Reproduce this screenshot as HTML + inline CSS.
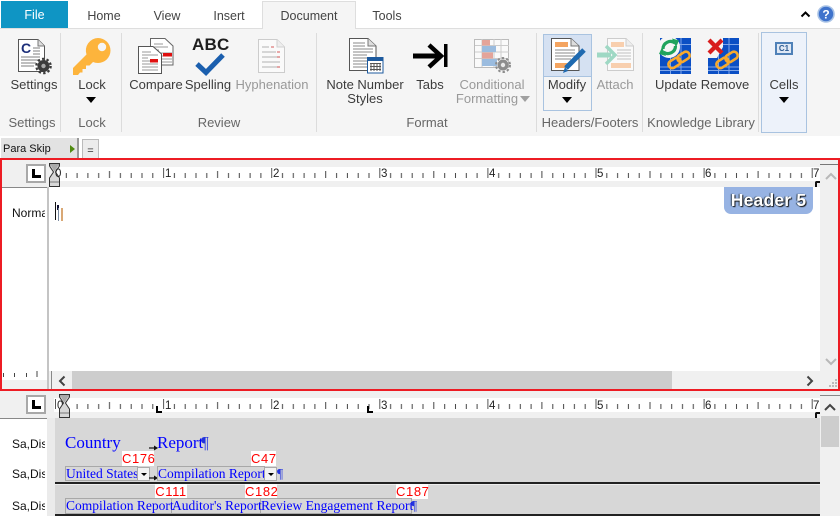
<!DOCTYPE html>
<html>
<head>
<meta charset="utf-8">
<style>
html,body{margin:0;padding:0;background:#fff}
#p{position:relative;width:840px;height:516px;overflow:hidden;background:#fff;font-family:"Liberation Sans",sans-serif;font-size:13px;color:#3c3c3c}
#p div,#p span{position:absolute;white-space:nowrap}
.t{font-size:13px;line-height:16px;text-align:center;transform:translateX(-50%)}
.g{color:#666}
.d{color:#999}
.tab{font-size:12.5px;line-height:16px;top:8px;color:#444;transform:translateX(-50%)}
.sep{width:1px;background:#dcdcdc;top:33px;height:99px}
.tri{width:0;height:0;border-left:5px solid transparent;border-right:5px solid transparent;border-top:6px solid #000}
svg{position:absolute;overflow:visible}
.ser{font-family:"Liberation Serif",serif;color:#0000ff;font-size:13.5px;line-height:16px}
.cn{background:#fff;color:#f00;font-size:13px;line-height:15px;height:15px;text-align:center;letter-spacing:.6px}
.lab{font-size:12px;line-height:14px;color:#111;left:12px;width:33px;overflow:hidden}
.fld{border:1px solid #a8a8a8;box-sizing:border-box}
.dd{background:#f2f2f2;border:1px solid #aaa;box-sizing:border-box;width:13px;height:14px}
.dd i{position:absolute;left:3px;top:5px;width:0;height:0;border-left:3px solid transparent;border-right:3px solid transparent;border-top:3px solid #000}
.rn{font-size:11.5px;line-height:12px;color:#222}
</style>
</head>
<body>
<div id="p">
<!-- Ribbon -->
<div style="left:0;top:28px;width:840px;height:108px;background:#f5f5f5;border-top:1px solid #dedede;box-sizing:border-box"></div>
<div style="left:1px;top:1px;width:67px;height:27px;background:#0f95c4;color:#fff;font-size:12.5px;line-height:29px;text-align:center">File</div>
<div class="tab" style="left:104px">Home</div>
<div class="tab" style="left:167px">View</div>
<div class="tab" style="left:229px">Insert</div>
<div style="left:262px;top:1px;width:94px;height:28px;background:#f5f5f5;border:1px solid #dedede;border-bottom:none;box-sizing:border-box"></div>
<div class="tab" style="left:309px">Document</div>
<div class="tab" style="left:387px">Tools</div>
<svg style="left:800px;top:10px" width="12" height="8"><path d="M1.5 6.5 L5.5 2.5 L9.5 6.5" fill="none" stroke="#000" stroke-width="2"/></svg>
<svg style="left:817px;top:5px" width="18" height="18"><circle cx="9" cy="9" r="8" fill="#3f73cc" stroke="#a9c3e6" stroke-width="1.6"/><text x="9" y="13.5" font-family="Liberation Sans" font-size="12" font-weight="bold" fill="#fff" text-anchor="middle">?</text></svg>

<div class="sep" style="left:60px"></div>
<div class="sep" style="left:121px"></div>
<div class="sep" style="left:316px"></div>
<div class="sep" style="left:536px"></div>
<div class="sep" style="left:642px"></div>
<div class="sep" style="left:758px"></div>

<!-- Settings icon -->
<svg style="left:18px;top:39px" width="36" height="36">
<path d="M0.5 .5H20L26.5 7V32.5H0.5Z" fill="#fff" stroke="#555"/>
<path d="M20 .5V7H26.5" fill="#ddd" stroke="#777"/>
<text x="3" y="14" font-family="Liberation Sans" font-weight="bold" font-size="14" fill="#1d2f7a">C</text>
<path d="M15 9h7M15 12h7M15 15h7M3 18h19M3 21h19M3 24h15M3 27h13" stroke="#999" stroke-width="1.3"/>
<circle cx="25.5" cy="27" r="6" fill="#3c3c3c"/><circle cx="25.5" cy="27" r="7.2" fill="none" stroke="#3c3c3c" stroke-width="2.2" stroke-dasharray="2.4 2.2"/><circle cx="25.5" cy="27" r="2.2" fill="#aaa"/>
</svg>
<div class="t" style="left:34px;top:77px">Settings</div>
<div class="t g" style="left:32px;top:115px">Settings</div>

<!-- Key -->
<svg style="left:73px;top:38px" width="38" height="38"><path d="M25 0a12.500 12.500 0 0 1 0 25c-1.800 0-3.500-.4-5-1l-3.500 3.500h-3.500v3.500h-3.500v3.500H7L5 37H0V30L13.500 16.500A12.500 12.500 0 0 1 25 0Z" fill="#fdb43c"/><circle cx="29" cy="9" r="4.200" fill="#f5f5f5"/></svg>
<div class="t" style="left:92px;top:77px">Lock</div>
<div class="tri" style="left:86px;top:97px"></div>
<div class="t g" style="left:92px;top:115px">Lock</div>

<!-- Compare -->
<svg style="left:138px;top:38px" width="38" height="37">
<path d="M12.500 .5H27L35 8V27H12.500Z" fill="#fff" stroke="#666"/>
<path d="M16 6h9M16 9h14M16 12h5M16 15h18M16 18h18M16 21h18M16 24h18" stroke="#999"/>
<rect x="25" y="15" width="9" height="3.500" fill="#e01010"/>
<path d="M0.500 8.500H15L23.500 16V35.500H.5Z" fill="#fff" stroke="#555"/>
<path d="M4 14h9M4 17h16M4 20h6M4 23h16M4 26h16M4 29h16M4 32h16" stroke="#999"/>
<rect x="12" y="21" width="8" height="3.500" fill="#e01010"/>
</svg>
<div class="t" style="left:156px;top:77px">Compare</div>

<!-- Spelling -->
<div style="left:192px;top:36px;font-size:17px;font-weight:bold;line-height:18px;color:#1e1e1e;letter-spacing:.2px">ABC</div>
<svg style="left:195px;top:52px" width="30" height="24"><path d="M2 12 L11 20.500 L28 3" fill="none" stroke="#1b5fae" stroke-width="5"/></svg>
<div class="t" style="left:208px;top:77px">Spelling</div>

<!-- Hyphenation -->
<svg style="left:258px;top:39px" width="28" height="35" opacity=".9">
<path d="M.5.5H19L26.500 8V33.500H.5Z" fill="#fbfbfb" stroke="#c8c8c8"/>
<path d="M19 .5V8H26.500" fill="#eee" stroke="#ccc"/>
<path d="M4 8h7M4 13h14M4 18h18M4 23h18M4 28h18" stroke="#bbb" stroke-width="1.200"/>
<path d="M13 8h3M19 13h3M19 18h3M19 28h3" stroke="#e08585" stroke-width="1.600"/>
</svg>
<div class="t d" style="left:272px;top:77px">Hyphenation</div>
<div class="t g" style="left:219px;top:115px">Review</div>

<!-- Note Number -->
<svg style="left:349px;top:38px" width="36" height="37">
<path d="M.5.5H19L27 8V32.500H.5Z" fill="#fff" stroke="#555"/>
<path d="M19 .5V8H27" fill="#ddd" stroke="#777"/>
<path d="M4 5h12M4 8h12M4 11h20M4 14h20M4 17h14M4 20h14M4 23h14M4 26h14M4 29h14" stroke="#888"/>
<rect x="18.500" y="19.500" width="15.500" height="15.500" fill="#fff" stroke="#1d5a9e"/>
<rect x="18" y="19" width="16.500" height="4" fill="#1d5a9e"/>
<path d="M21 25.500h11M21 28.500h11M21 31.500h11M22 25v8M25 25v8M28 25v8M31 25v8" stroke="#555" stroke-width="1"/>
</svg>
<div class="t" style="left:365px;top:77px">Note Number</div>
<div class="t" style="left:365px;top:91px">Styles</div>

<!-- Tabs -->
<svg style="left:413px;top:44px" width="36" height="24"><path d="M0 12H27" stroke="#000" stroke-width="5"/><path d="M16 1 L28 12 L16 23" fill="none" stroke="#000" stroke-width="4.500"/><rect x="31" y="0" width="3.500" height="23" fill="#000"/></svg>
<div class="t" style="left:430px;top:77px">Tabs</div>

<!-- Conditional -->
<svg style="left:474px;top:38px" width="38" height="37">
<rect x=".5" y="1.500" width="34" height="28" fill="#fafafa" stroke="#bbb"/>
<path d="M8 1v28M20 1v28M27 1v28M1 7.500h34M1 14h34M1 20.500h34" stroke="#ccc"/>
<rect x="8" y="2" width="8" height="5.500" fill="#e4a49a"/>
<rect x="8" y="8" width="14" height="6" fill="#9bbcdf"/>
<rect x="8" y="14.500" width="11" height="6" fill="#e4a49a"/>
<rect x="8" y="21" width="15" height="7" fill="#9bbcdf"/>
<circle cx="29" cy="27" r="5.500" fill="#8c8c8c"/><circle cx="29" cy="27" r="7" fill="none" stroke="#8c8c8c" stroke-width="2" stroke-dasharray="2.400 2.100"/><circle cx="29" cy="27" r="2.200" fill="#e8e8e8"/>
</svg>
<div class="t d" style="left:492px;top:77px">Conditional</div>
<div class="t d" style="left:487px;top:91px">Formatting</div>
<div style="left:520px;top:96px;width:0;height:0;border-left:5px solid transparent;border-right:5px solid transparent;border-top:6px solid #a0a0a0"></div>
<div class="t g" style="left:427px;top:115px">Format</div>

<!-- Modify -->
<div style="left:543px;top:34px;width:49px;height:77px;background:#f5f5f5;border:1px solid #a9c3e0;box-sizing:border-box"></div>
<div style="left:544px;top:35px;width:47px;height:41px;background:#d5e1f2;border-bottom:1px solid #a9c3e0"></div>
<svg style="left:551px;top:38px" width="38" height="38">
<path d="M.5.5H20L28 8V32.500H.5Z" fill="#fff" stroke="#555"/>
<path d="M20 .5V8H28" fill="#ddd" stroke="#777"/>
<rect x="4" y="4" width="13" height="5" fill="#f4a460"/>
<path d="M4 12h20M4 15h20M4 18h20M4 21h16" stroke="#888"/>
<rect x="4" y="25" width="13" height="5" fill="#f4a460"/>
<path d="M33 12 L15 30" stroke="#1f6ab0" stroke-width="5"/><path d="M14 29 L12 35 L17 33Z" fill="#1f6ab0"/>
</svg>
<div class="t" style="left:567px;top:77px">Modify</div>
<div class="tri" style="left:562px;top:97px"></div>

<!-- Attach -->
<svg style="left:597px;top:38px" width="38" height="36">
<path d="M10.500.5H29L36.500 8V32.500H10.500Z" fill="#fafafa" stroke="#ccc"/>
<path d="M29 .5V8H36.500" fill="#eee" stroke="#ccc"/>
<rect x="14" y="4" width="13" height="5" fill="#f8cfae"/>
<rect x="14" y="25" width="20" height="5" fill="#f8cfae"/>
<path d="M20 12h14M20 15h14M20 18h14M20 21h14" stroke="#c0c0c0"/>
<path d="M0 17H14" stroke="#9fd8c4" stroke-width="5"/><path d="M9 8 L18 17 L9 26" fill="none" stroke="#9fd8c4" stroke-width="3.500"/>
</svg>
<div class="t d" style="left:615px;top:77px">Attach</div>
<div class="t g" style="left:590px;top:115px">Headers/Footers</div>

<!-- Update -->
<svg style="left:660px;top:38px" width="33" height="37">
<path d="M0 0H31V36H0Z" fill="#0b4fc4"/>
<path d="M10.500 0V36M21 0V36M0 6.500H31M0 29H31M0 32.500H31" stroke="#7fa6e8" stroke-width="1"/>
<circle cx="9" cy="9" r="11" fill="#f5f5f5"/>
<path d="M3 11a7.500 7.500 0 0 1 12-6" fill="none" stroke="#1fa35c" stroke-width="3.200"/><path d="M12 .5l7 2-3 7Z" fill="#1fa35c"/>
<path d="M15.500 8a7.500 7.500 0 0 1-12 6" fill="none" stroke="#1fa35c" stroke-width="3.200"/><path d="M6 18l-7-2 3-7Z" fill="#1fa35c"/>
<rect x="8" y="21.500" width="13" height="7.500" rx="3.500" fill="none" stroke="#f8a92c" stroke-width="2.600" transform="rotate(-32 14 25)"/>
<rect x="17" y="15.500" width="13" height="7.500" rx="3.500" fill="none" stroke="#f8a92c" stroke-width="2.600" transform="rotate(-32 23 19)"/>
</svg>
<div class="t" style="left:676px;top:77px">Update</div>

<!-- Remove -->
<svg style="left:708px;top:38px" width="33" height="37">
<path d="M0 0H31V36H0Z" fill="#0b4fc4"/>
<path d="M10.500 0V36M21 0V36M0 6.500H31M0 29H31M0 32.500H31" stroke="#7fa6e8" stroke-width="1"/>
<path d="M0 0H15V9L9 20H0Z" fill="#f5f5f5"/>
<path d="M1 2 L14 15 M14 2 L1 15" stroke="#d81e1e" stroke-width="4.200"/>
<rect x="8" y="21.500" width="13" height="7.500" rx="3.500" fill="none" stroke="#f8a92c" stroke-width="2.600" transform="rotate(-32 14 25)"/>
<rect x="17" y="15.500" width="13" height="7.500" rx="3.500" fill="none" stroke="#f8a92c" stroke-width="2.600" transform="rotate(-32 23 19)"/>
</svg>
<div class="t" style="left:725px;top:77px">Remove</div>
<div class="t g" style="left:701px;top:115px">Knowledge Library</div>

<!-- Cells -->
<div style="left:761px;top:32px;width:46px;height:101px;background:#edf2fa;border:1px solid #a9c3e0;box-sizing:border-box"></div>
<div style="left:775px;top:42px;width:18px;height:13px;background:#dfe8f5;border:2px solid #4f81b8;box-sizing:border-box;color:#2d5c93;font-size:8px;font-weight:bold;line-height:9px;text-align:center">C1</div>
<div class="t" style="left:784px;top:77px">Cells</div>
<div class="tri" style="left:779px;top:97px"></div>

<!-- Para Skip -->
<div style="left:0;top:136px;width:840px;height:22px;background:#fff"></div>
<div style="left:1px;top:138px;width:78px;height:20px;background:#e2e2e2;border-right:2px solid #999;box-sizing:border-box;font-size:11px;line-height:22px;color:#111;padding-left:2px">Para Skip</div>
<div style="left:70px;top:145px;width:0;height:0;border-top:4px solid transparent;border-bottom:4px solid transparent;border-left:5px solid #4f8a10"></div>
<div style="left:82px;top:139px;width:17px;height:19px;background:#ececec;border:1px solid #bbb;border-bottom:none;box-sizing:border-box;font-size:11px;line-height:22px;text-align:center;color:#333">=</div>

<!-- Ruler pattern -->
<svg width="0" height="0" style="left:0;top:0"><defs>
<pattern id="rt" x="0" y="0" width="108.100" height="30" patternUnits="userSpaceOnUse">
<path d="M11.300 9v5M22.100 9v5M32.900 9v5M43.700 9v5M65.400 9v5M76.200 9v5M87 9v5M97.800 9v5" stroke="#444" stroke-width="1"/>
<path d="M54.500 7v7" stroke="#444" stroke-width="1"/>
<path d="M.5 4v10" stroke="#555" stroke-width="1"/>
</pattern>
</defs></svg>

<!-- Top pane -->
<div style="left:0;top:158px;width:840px;height:233px;box-sizing:border-box;border:2px solid #ed1c24;background:#fff"></div>
<div style="left:2px;top:160px;width:818px;height:27px;background:#f0f0f0"></div>
<div style="left:54px;top:167px;width:766px;height:14px;background:#fff"></div>
<svg style="left:55px;top:164px" width="765" height="20"><rect width="765" height="20" fill="url(#rt)"/></svg>
<span class="rn" style="left:165px;top:168px">1</span><span class="rn" style="left:273px;top:168px">2</span><span class="rn" style="left:381px;top:168px">3</span><span class="rn" style="left:489px;top:168px">4</span><span class="rn" style="left:597px;top:168px">5</span><span class="rn" style="left:705px;top:168px">6</span><span class="rn" style="left:813px;top:168px">7</span>
<div style="left:26px;top:164px;width:20px;height:19px;background:#fff;border:2px solid #a8a8a8;box-sizing:border-box"></div>
<div style="left:32px;top:169px;width:3px;height:9px;background:#000"></div><div style="left:32px;top:175px;width:9px;height:3px;background:#000"></div>
<div style="left:2px;top:187px;width:45px;height:1px;background:#888"></div>
<div style="left:47px;top:187px;width:2px;height:202px;background:#c4c4c4"></div>
<svg style="left:49px;top:163px" width="12" height="24"><path d="M.5.500H10.500V3L6.500 9L10.500 15V23.500H.5V15L4.500 9L.5 3Z" fill="#d8d8d8" stroke="#333"/><path d="M1 2H10M1 19H10" stroke="#777"/><path d="M1 1h9L6 8H5Z" fill="#aaa"/></svg>
<span class="rn" style="left:55px;top:168px">0</span>
<div class="lab" style="top:206px">Normal</div>
<div style="left:55px;top:202px;width:1px;height:18px;background:#111"></div>
<div style="left:57px;top:205px;width:2px;height:5px;background:#113"></div>
<div style="left:58px;top:208px;width:5px;height:13px;border-left:1px solid #7a8aa0;border-right:2px solid #d9a875;box-sizing:border-box"></div>
<!-- Header 5 tag -->
<div style="left:724px;top:187px;width:89px;height:27px;background:#97b3e3;border-radius:0 0 7px 7px;color:#fff;font-size:17.500px;font-weight:bold;line-height:27px;text-align:center;text-shadow:1px 1px 1px #111,-1px 0 1px #345;letter-spacing:.2px">Header 5</div>
<div style="left:815px;top:181px;width:5px;height:6px;border-left:2px solid #111;border-top:2px solid #111;box-sizing:border-box;border-radius:2px 0 0 0"></div>
<!-- Scrollbars top -->
<div style="left:820px;top:160px;width:18px;height:229px;background:#f0f0f0"></div>
<div style="left:820px;top:164px;width:18px;height:1px;background:#777"></div>
<svg style="left:825px;top:172px" width="12" height="9"><path d="M1 7L6 2L11 7" fill="none" stroke="#b8b8b8" stroke-width="2"/></svg>
<svg style="left:825px;top:357px" width="12" height="9"><path d="M1 2L6 7L11 2" fill="none" stroke="#b8b8b8" stroke-width="2"/></svg>
<div style="left:49px;top:371px;width:771px;height:18px;background:#f0f0f0"></div>
<div style="left:2px;top:380px;width:45px;height:9px;background:#f0f0f0"></div>
<svg style="left:2px;top:368px" width="45" height="14"><path d="M1.500 5v4M12.500 5v4M24.500 5v4M35 3v6" stroke="#444"/></svg>
<div style="left:51px;top:371px;width:1px;height:18px;background:#888"></div>
<div style="left:72px;top:371px;width:600px;height:18px;background:#cdcdcd"></div>
<svg style="left:57px;top:375px" width="10" height="12"><path d="M7.500 1.500L3 6L7.500 10.500" fill="none" stroke="#444" stroke-width="2"/></svg>
<svg style="left:805px;top:375px" width="10" height="12"><path d="M2.500 1.500L7 6L2.500 10.500" fill="none" stroke="#444" stroke-width="2"/></svg>
<svg style="left:828px;top:378px" width="10" height="11"><path d="M7 1h2v2h-2zM7 4h2v2h-2zM4 4h2v2h-2zM7 7h2v2h-2zM4 7h2v2h-2zM1 7h2v2h-2z" fill="#bbb"/></svg>

<!-- Bottom pane -->
<div style="left:0;top:391px;width:820px;height:27px;background:#f0f0f0"></div>
<div style="left:54px;top:398px;width:766px;height:14px;background:#fff"></div>
<svg style="left:55px;top:395px" width="765" height="20"><rect width="765" height="20" fill="url(#rt)"/></svg>
<span class="rn" style="left:57px;top:400px">0</span><span class="rn" style="left:165px;top:400px">1</span><span class="rn" style="left:273px;top:400px">2</span><span class="rn" style="left:381px;top:400px">3</span><span class="rn" style="left:489px;top:400px">4</span><span class="rn" style="left:597px;top:400px">5</span><span class="rn" style="left:705px;top:400px">6</span><span class="rn" style="left:813px;top:400px">7</span>
<div style="left:156px;top:406px;width:2px;height:7px;background:#000"></div><div style="left:156px;top:411px;width:6px;height:2px;background:#000"></div>
<div style="left:367px;top:406px;width:2px;height:7px;background:#000"></div><div style="left:367px;top:411px;width:6px;height:2px;background:#000"></div>
<div style="left:26px;top:395px;width:20px;height:19px;background:#fff;border:2px solid #a8a8a8;box-sizing:border-box"></div>
<div style="left:32px;top:400px;width:3px;height:9px;background:#000"></div><div style="left:32px;top:406px;width:9px;height:3px;background:#000"></div>
<svg style="left:59px;top:394px" width="12" height="24"><path d="M.5.500H10.500V3L6.500 9L10.500 15V23.500H.5V15L4.500 9L.5 3Z" fill="#d8d8d8" stroke="#333"/><path d="M1 2H10M1 19H10" stroke="#777"/><path d="M1 1h9L6 8H5Z" fill="#aaa"/></svg>
<div style="left:0;top:418px;width:47px;height:1px;background:#888"></div>
<div style="left:0;top:419px;width:47px;height:97px;background:#fff"></div>
<div style="left:47px;top:418px;width:8px;height:98px;background:#ebebeb"></div>
<div style="left:55px;top:418px;width:765px;height:98px;background:#d7d7d7"></div>
<div style="left:55px;top:482px;width:765px;height:2px;background:#222"></div>
<div style="left:55px;top:484px;width:765px;height:1px;background:#eee"></div>
<div style="left:55px;top:514px;width:765px;height:2px;background:#222"></div>
<div style="left:820px;top:391px;width:20px;height:125px;background:#f0f0f0"></div>
<div style="left:820px;top:395px;width:20px;height:1px;background:#888"></div>
<div style="left:821px;top:416px;width:18px;height:31px;background:#cdcdcd"></div>
<svg style="left:824px;top:403px" width="12" height="9"><path d="M1 7L6 2L11 7" fill="none" stroke="#444" stroke-width="2"/></svg>
<div style="left:815px;top:412px;width:5px;height:6px;border-left:2px solid #111;border-top:2px solid #111;box-sizing:border-box;border-radius:2px 0 0 0"></div>

<div class="lab" style="top:437px">Sa,Dis</div>
<div class="lab" style="top:467px">Sa,Dis</div>
<div class="lab" style="top:499px">Sa,Dis</div>

<div class="ser" style="left:65px;top:433px;font-size:17px;line-height:20px">Country</div>
<div class="ser" style="left:157px;top:433px;font-size:17px;line-height:20px">Report</div>
<div class="ser" style="left:201px;top:433px;font-size:17px;line-height:20px;color:#2233dd">¶</div>
<svg style="left:149px;top:443px" width="10" height="10"><path d="M0 5H7" stroke="#111" stroke-width="1.200"/><path d="M5 2.500L9 5L5 7.500Z" fill="#111"/></svg>

<div class="cn" style="left:122px;top:451px;width:32px">C176</div>
<div class="cn" style="left:251px;top:451px;width:25px">C47</div>

<div class="fld" style="left:65px;top:466px;width:73px;height:15px"></div>
<div class="ser" style="left:66px;top:466px">United States</div>
<div class="dd" style="left:137px;top:467px"><i></i></div>
<svg style="left:149px;top:473px" width="10" height="10"><path d="M0 5H7" stroke="#111" stroke-width="1.200"/><path d="M5 2.500L9 5L5 7.500Z" fill="#111"/></svg>
<div class="fld" style="left:157px;top:466px;width:108px;height:15px"></div>
<div class="ser" style="left:158px;top:466px">Compilation Report</div>
<div class="dd" style="left:264px;top:467px"><i></i></div>
<div class="ser" style="left:277px;top:466px;color:#2233dd">¶</div>

<div class="cn" style="left:155px;top:484px;width:32px">C111</div>
<div class="cn" style="left:245px;top:484px;width:32px">C182</div>
<div class="cn" style="left:396px;top:484px;width:32px">C187</div>

<div class="fld" style="left:65px;top:498px;width:107px;height:16px"></div>
<div class="fld" style="left:171px;top:498px;width:90px;height:16px"></div>
<div class="fld" style="left:260px;top:498px;width:152px;height:16px"></div>
<div class="ser" style="left:66px;top:498px">Compilation Report</div>
<div class="ser" style="left:172px;top:498px">Auditor's Report</div>
<div class="ser" style="left:261px;top:498px">Review Engagement Report</div>
<div class="ser" style="left:411px;top:498px;color:#2233dd">¶</div>
</div>
</body>
</html>
